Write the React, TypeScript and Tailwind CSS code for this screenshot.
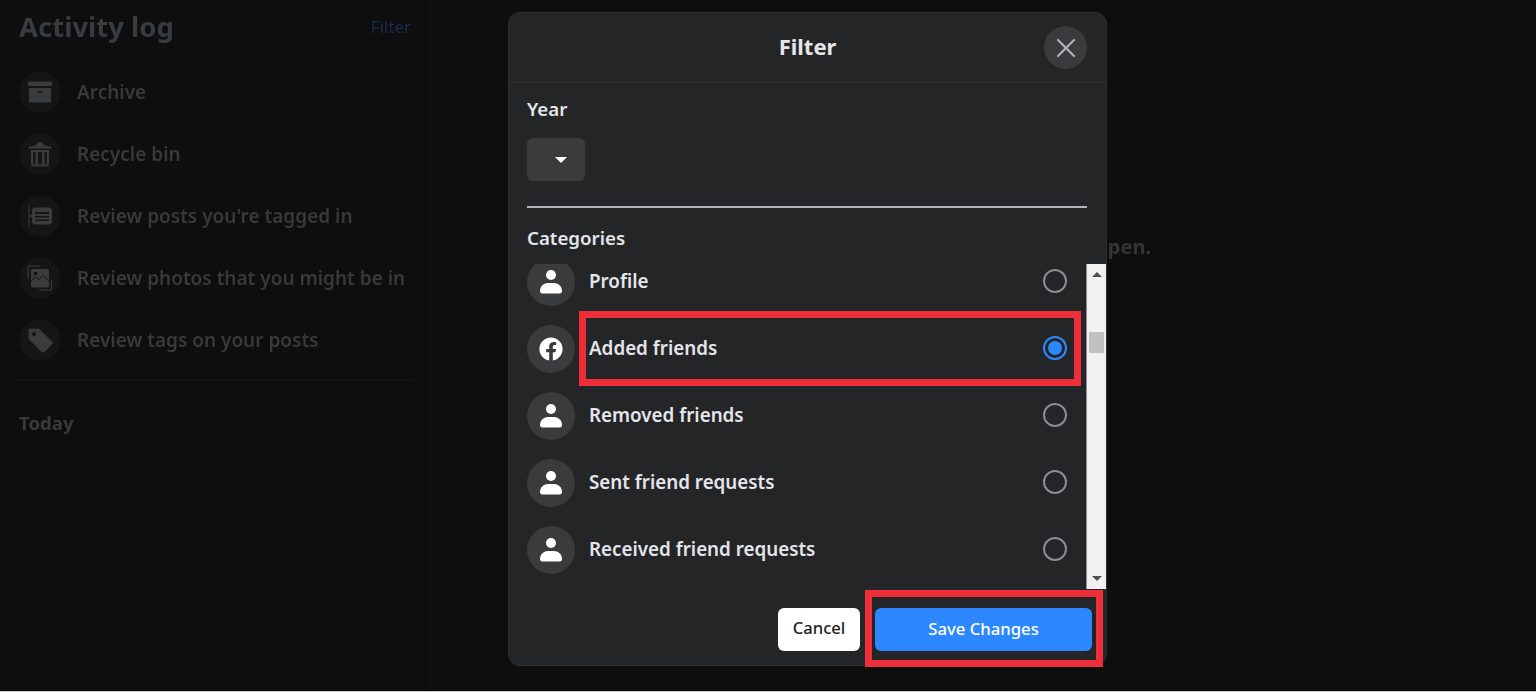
import { FaFacebook } from "react-icons/fa";
import { X } from "lucide-react";

const font = { fontFamily: '"Noto Sans", sans-serif' };

const ArchiveIcon = () => (
  <svg width="26" height="22" viewBox="0 0 26 22" fill="#3a3b3d">
    <path d="M1 1.500a1 1 0 0 1 1-1h22a1 1 0 0 1 1 1v3.500H1z" />
    <path fillRule="evenodd" d="M2 7h22v13a1.500 1.500 0 0 1-1.500 1.500h-19A1.500 1.500 0 0 1 2 20zm8.500 3v1.500h5V10z" />
  </svg>
);

const TrashIcon = () => (
  <svg width="24" height="26" viewBox="0 0 24 26" fill="#3a3b3d">
    <path d="M1 5.500c3-.2 5-.5 6.500-1.200C8.500 2.500 10 1 12 1s3.500 1.500 4.500 3.300c1.500.7 3.500 1 6.500 1.200V7.500H1z" />
    <path fillRule="evenodd" d="M3 9h18v13.500a3 3 0 0 1-3 3H6a3 3 0 0 1-3-3zm2.200 2v11.300c0 .7.500 1.200 1.200 1.200h1.100V11zm4.800 0v12.500h4V11zm6.500 0v12.500h1.100c.7 0 1.200-.5 1.200-1.200V11z" />
  </svg>
);

const PostsIcon = () => (
  <svg width="24" height="24" viewBox="0 0 24 24" fill="#3a3b3d">
    <rect x="0.500" y="1" width="1" height="22" />
    <path d="M1.500 12l3-2.500v5z" />
    <path fillRule="evenodd" d="M7 3.500h14a3 3 0 0 1 3 3v11a3 3 0 0 1-3 3H7a3 3 0 0 1-3-3v-11a3 3 0 0 1 3-3zM7 8v2h14V8zm0 4v1.500h14V12zm0 3.500v1.500h14v-1.500z" />
  </svg>
);

const PhotosIcon = () => (
  <svg width="26" height="26" viewBox="0 0 26 26" fill="none" stroke="#3a3b3d" strokeWidth="1.200">
    <path d="M1 14V2.500A1.500 1.500 0 0 1 2.500 1h11" />
    <path d="M24.500 15v8.500a1.500 1.500 0 0 1-1.500 1.500H12" />
    <path fill="#3a3b3d" stroke="none" d="M5.500 4h15a1.500 1.500 0 0 1 1.500 1.500V21a1.500 1.500 0 0 1-1.500 1.500h-15A1.500 1.500 0 0 1 4 21V5.500A1.500 1.500 0 0 1 5.500 4z" />
    <circle cx="8.500" cy="8.500" r="1.800" fill="#111111" stroke="none" />
    <path stroke="#111111" strokeWidth="1" d="M4 16l5-4 3 2.500 4-4 6 6" />
  </svg>
);

const TagIcon = () => (
  <svg width="25" height="25" viewBox="0 0 25 25" fill="#3a3b3d">
    <path fillRule="evenodd" d="M2.500 0.500h7.500a2 2 0 0 1 1.400.6l12.500 12.500a2 2 0 0 1 0 2.800l-7.500 7.500a2 2 0 0 1-2.800 0L1.100 11.400A2 2 0 0 1 .5 10V2.500a2 2 0 0 1 2-2zM6 8a2 2 0 1 0 0-4 2 2 0 0 0 0 4z" />
  </svg>
);

const PersonIcon = () => (
  <svg width="24" height="26" viewBox="0 0 24 26" fill="#ffffff">
    <circle cx="12" cy="6" r="5" />
    <path d="M1 22c0-5 4-8 8-8h6c4 0 8 3 8 8 0 1.500-.8 2.500-2.200 2.500H3.200C1.800 24.500 1 23.500 1 22z" />
  </svg>
);

const sidebarLinks = [
  { label: "Archive", icon: <ArchiveIcon /> },
  { label: "Recycle bin", icon: <TrashIcon /> },
  { label: "Review posts you're tagged in", icon: <PostsIcon /> },
  { label: "Review photos that you might be in", icon: <PhotosIcon /> },
  { label: "Review tags on your posts", icon: <TagIcon /> },
];

const categories = [
  { label: "Profile", facebook: false, selected: false },
  { label: "Added friends", facebook: true, selected: true },
  { label: "Removed friends", facebook: false, selected: false },
  { label: "Sent friend requests", facebook: false, selected: false },
  { label: "Received friend requests", facebook: false, selected: false },
];

const Sidebar = () => (
  <aside className="w-[431px] h-full shrink-0 border-r border-[#141414] px-[15px] blur-[0.5px]">
    <div className="flex items-center justify-between pl-1 pr-1 h-[53px]">
      <h1 className="text-[27.5px] leading-none font-bold text-[#383b3f]">Activity log</h1>
      <span className="text-[17px] text-[#1a2c4d]">Filter</span>
    </div>
    <div className="flex flex-col gap-5 pl-1 pt-[18px] pb-[19px] border-b border-[#171717]">
      {sidebarLinks.map((link) => (
        <div key={link.label} className="flex items-center gap-4 h-[42px]">
          <div className="w-[42px] h-[42px] rounded-full bg-[#151515] flex items-center justify-center shrink-0">
            {link.icon}
          </div>
          <span className="text-[19px] leading-none font-semibold text-[#38393a] whitespace-nowrap">{link.label}</span>
        </div>
      ))}
    </div>
    <div className="pl-1 pt-[29px] text-[18.6px] leading-[26px] font-bold text-[#383a3b]">Today</div>
  </aside>
);

const CategoryRow = ({ label, facebook, selected }: (typeof categories)[number]) => (
  <div className="flex items-center h-[67px] shrink-0">
    <div className="w-12 h-12 rounded-full bg-[#3a3b3c] flex items-center justify-center shrink-0">
      {facebook ? <FaFacebook className="w-6 h-6 text-white" /> : <PersonIcon />}
    </div>
    <span className="ml-3.5 text-[18.8px] font-semibold text-[#e4e6eb] flex-1">{label}</span>
    {selected ? (
      <div className="w-6 h-6 rounded-full border-2 border-[#2d88ff] flex items-center justify-center mr-[19px] mb-[2px]">
        <div className="w-[14px] h-[14px] rounded-full bg-[#2d88ff]" />
      </div>
    ) : (
      <div className="w-6 h-6 rounded-full border-2 border-[#8a8d91] mr-[19px] mb-[2px]" />
    )}
  </div>
);

const Scrollbar = () => (
  <div className="w-5 shrink-0 h-full bg-[#f1f1f1] border-l border-[#8f8f8f] flex flex-col items-center justify-between py-[8px]">
    <div className="w-0 h-0 border-x-[5px] border-x-transparent border-b-[5px] border-b-[#505050]" />
    <div className="w-0 h-0 border-x-[5px] border-x-transparent border-t-[5px] border-t-[#505050]" />
  </div>
);

const FilterModal = () => (
  <div className="absolute left-[508px] top-3 w-[599px] h-[654px] rounded-xl bg-[#242526] border border-[#2e2f30] flex flex-col">
    <div className="relative h-[70px] shrink-0 border-b border-[#2f3031] flex items-center justify-center">
      <span className="text-[22px] leading-[30px] -mt-[4px] font-bold text-[#e4e6eb]">Filter</span>
      <button className="absolute right-[19px] top-[13px] w-[43px] h-[43px] rounded-full bg-[#3a3b3c] flex items-center justify-center">
        <X className="w-8 h-8 text-[#b0b3b8]" strokeWidth={1.6} />
      </button>
    </div>
    <div className="pl-[18px] pr-[19px]">
      <div className="pt-[12px] text-[18.7px] leading-[28px] font-semibold text-[#e4e6eb]">Year</div>
      <div className="mt-[15px] w-[58px] h-[43px] rounded-md bg-[#3a3b3c] flex items-center justify-end pr-[18px]">
        <div className="w-0 h-0 border-x-[6px] border-x-transparent border-t-[6px] border-t-white" />
      </div>
      <div className="mt-[25px] h-0.5 bg-[#b0b3b8]" />
      <div className="mt-[16px] text-[18.7px] leading-[28px] font-semibold text-[#e4e6eb]">Categories</div>
    </div>
    <div className="relative mt-[12px] h-[325px] flex pl-[18px] overflow-hidden">
      <div className="flex-1 flex flex-col -mt-[16px]">
        {categories.map((c) => (
          <CategoryRow key={c.label} {...c} />
        ))}
      </div>
      <Scrollbar />
      <div className="absolute right-[2px] top-[68px] w-[15px] h-[21px] bg-[#c1c1c1]" />
    </div>
    <div className="flex justify-end gap-[15px] pr-[14px] pt-[19px]">
      <button className="w-[82px] h-[43px] pb-[2px] rounded-md bg-white text-[16.6px] font-medium text-[#1c1e21]">Cancel</button>
      <button className="w-[217px] h-[43px] pb-[2px] rounded-md bg-[#2d88ff] text-[16.7px] font-medium text-white">Save Changes</button>
    </div>
  </div>
);

export default function App() {
  return (
    <div style={font} className="relative w-[1536px] h-[692px] overflow-hidden bg-[#0e0e0e] flex border-b border-[#c8c8c8]">
      <Sidebar />
      <main className="flex-1 flex justify-end pr-[385px] pt-[232px]">
        <span className="text-[20px] leading-[30px] font-bold text-[#333435] blur-[0.5px]">open.</span>
      </main>
      <FilterModal />
      <div className="absolute left-[579px] top-[311px] w-[502px] h-[75px] border-[7px] border-[#ee2e38]" />
      <div className="absolute left-[865px] top-[590px] w-[238px] h-[77px] border-[7px] border-[#ee2e38]" />
    </div>
  );
}
